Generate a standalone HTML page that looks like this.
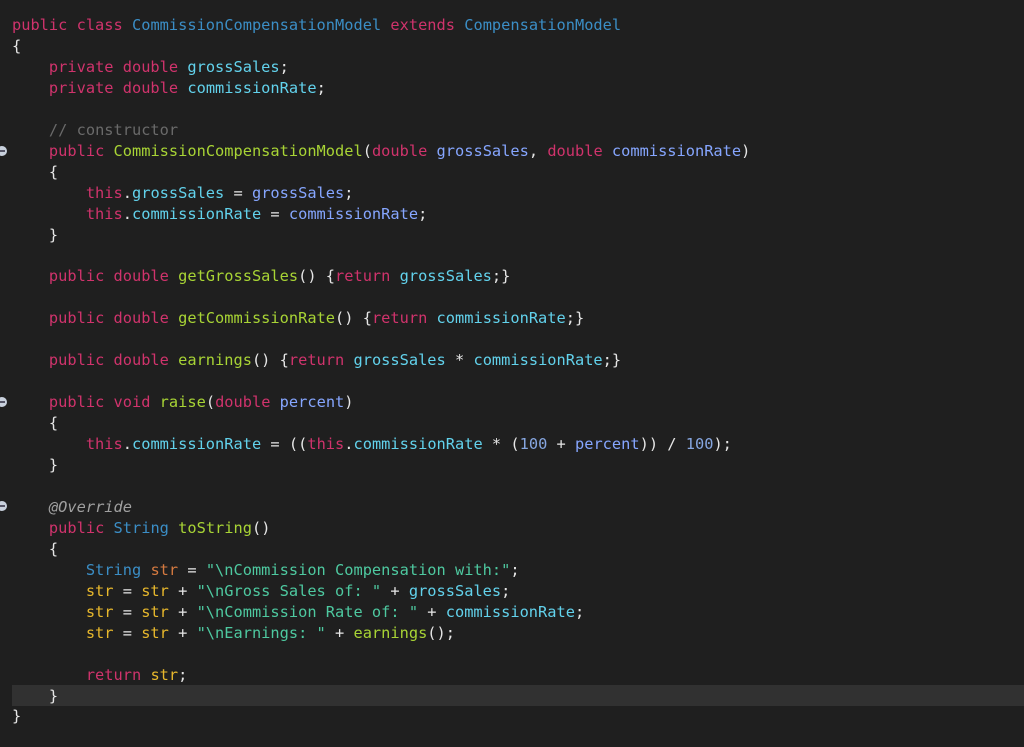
<!DOCTYPE html><html><head><style>
body{margin:0;width:1024px;height:747px;background:#1f1f1f;overflow:hidden;position:relative}
pre{position:absolute;left:12px;top:15px;margin:0;font-family:"DejaVu Sans Mono","Liberation Mono",monospace;font-size:15.33px;line-height:20.96px;color:#e6e6e6}
.hl{position:absolute;left:12px;right:0;top:685px;height:21px;background:#313131}
.k{color:#d0336c}.t{color:#3b8ec6}.m{color:#a8d435}.f{color:#62d2ec}.p{color:#86a6ff}.c{color:#6a6a6a}.a{color:#a0a0a0;font-style:italic}
.s{color:#4ec9a0}.v{color:#d57a40}.y{color:#e8b82c}.n{color:#86a6e0}
.g{position:absolute;left:-3px;width:10px;height:10px;border-radius:50%;background:#c8d0dc}
.g::after{content:"";position:absolute;left:2px;top:4px;width:6px;height:1.5px;background:#556}
</style></head><body>
<div class="hl"></div>
<div class="g" style="top:146px"></div><div class="g" style="top:397px"></div><div class="g" style="top:501px"></div>
<pre><span class="k">public class</span> <span class="t">CommissionCompensationModel</span> <span class="k">extends</span> <span class="t">CompensationModel</span>
{
    <span class="k">private double</span> <span class="f">grossSales</span>;
    <span class="k">private double</span> <span class="f">commissionRate</span>;

    <span class="c">// constructor</span>
    <span class="k">public</span> <span class="m">CommissionCompensationModel</span>(<span class="k">double</span> <span class="p">grossSales</span>, <span class="k">double</span> <span class="p">commissionRate</span>)
    {
        <span class="k">this</span>.<span class="f">grossSales</span> = <span class="p">grossSales</span>;
        <span class="k">this</span>.<span class="f">commissionRate</span> = <span class="p">commissionRate</span>;
    }

    <span class="k">public double</span> <span class="m">getGrossSales</span>() {<span class="k">return</span> <span class="f">grossSales</span>;}

    <span class="k">public double</span> <span class="m">getCommissionRate</span>() {<span class="k">return</span> <span class="f">commissionRate</span>;}

    <span class="k">public double</span> <span class="m">earnings</span>() {<span class="k">return</span> <span class="f">grossSales</span> * <span class="f">commissionRate</span>;}

    <span class="k">public void</span> <span class="m">raise</span>(<span class="k">double</span> <span class="p">percent</span>)
    {
        <span class="k">this</span>.<span class="f">commissionRate</span> = ((<span class="k">this</span>.<span class="f">commissionRate</span> * (<span class="n">100</span> + <span class="p">percent</span>)) / <span class="n">100</span>);
    }

    <span class="a">@Override</span>
    <span class="k">public</span> <span class="t">String</span> <span class="m">toString</span>()
    {
        <span class="t">String</span> <span class="v">str</span> = <span class="s">"\nCommission Compensation with:"</span>;
        <span class="y">str</span> = <span class="y">str</span> + <span class="s">"\nGross Sales of: "</span> + <span class="f">grossSales</span>;
        <span class="y">str</span> = <span class="y">str</span> + <span class="s">"\nCommission Rate of: "</span> + <span class="f">commissionRate</span>;
        <span class="y">str</span> = <span class="y">str</span> + <span class="s">"\nEarnings: "</span> + <span class="m">earnings</span>();

        <span class="k">return</span> <span class="y">str</span>;
    }
}</pre>
</body></html>
